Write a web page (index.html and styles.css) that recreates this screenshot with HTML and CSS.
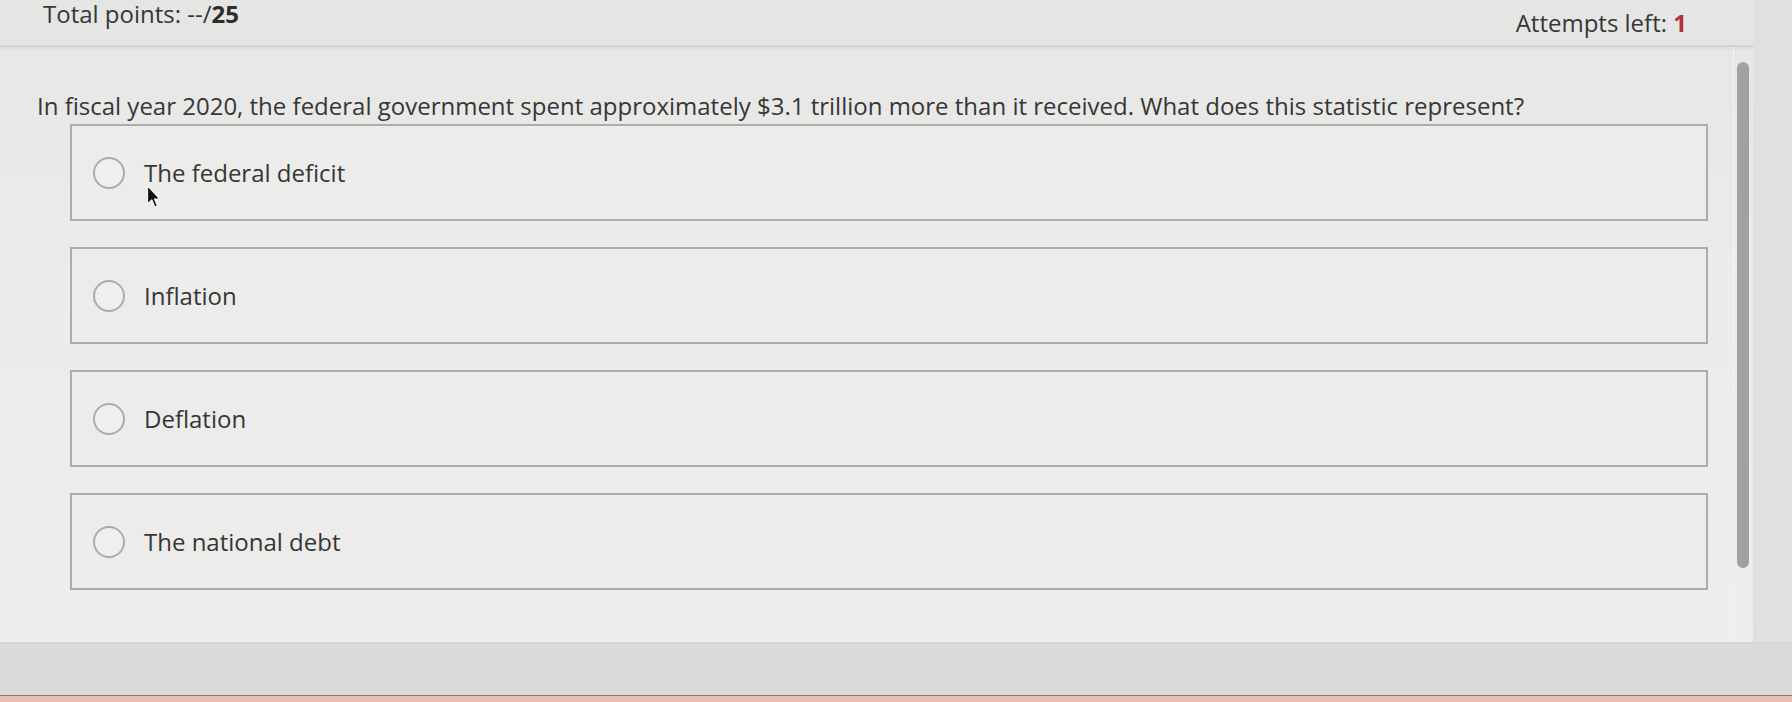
FILE: index.html
```html
<!DOCTYPE html>
<html lang="en">
<head>
<meta charset="utf-8">
<title>Question</title>
<link rel="stylesheet" href="styles.css">
</head>
<body>
<div class="screen">
  <div class="top">
    <div class="window">
      <header class="bar">
        <div class="points">Total points: --/<b>25</b></div>
        <div class="attempts">Attempts left: <b class="num">1</b></div>
      </header>
      <div class="body">
        <div class="content">
          <p class="question">In fiscal year 2020, the federal government spent approximately $3.1 trillion more than it received. What does this statistic represent?</p>
          <ul class="options">
            <li class="option"><span class="radio"></span><span class="label">The federal deficit</span></li>
            <li class="option"><span class="radio"></span><span class="label">Inflation</span></li>
            <li class="option"><span class="radio"></span><span class="label">Deflation</span></li>
            <li class="option"><span class="radio"></span><span class="label">The national debt</span></li>
          </ul>
        </div>
        <div class="scroll"><div class="thumb"></div></div>
      </div>
    </div>
    <div class="outer"></div>
  </div>
  <div class="band"></div>
  <div class="pink"></div>
  <svg class="cursor" width="15" height="25" viewBox="0 0 15 25" aria-hidden="true">
    <path d="M1.5 1.5 L1.5 20 L5.8 16 L8.8 23 L11.4 21.8 L8.5 15 L13.8 15 Z" fill="#111" stroke="#f4f4f4" stroke-width="1.2" stroke-linejoin="round"/>
  </svg>
</div>
</body>
</html>
```

FILE: styles.css
```css
* { box-sizing: border-box; }

html, body {
  margin: 0;
  padding: 0;
  background: #e1e2e0;
}

body {
  font-family: "Open Sans", "Noto Sans", "Liberation Sans", sans-serif;
  color: #363737;
}

.screen {
  position: relative;
  width: 1792px;
  height: 702px;
  display: flex;
  flex-direction: column;
  overflow: hidden;
}

.top {
  height: 642px;
  display: flex;
  flex-direction: row;
}

.window {
  width: 1753px;
  display: flex;
  flex-direction: column;
  background: linear-gradient(to bottom, #e6e6e4 0%, #ebebe9 40%, #eeeeec 100%);
}

.outer {
  flex: 1;
  background: #e0e1df;
}

.bar {
  height: 47px;
  display: flex;
  justify-content: space-between;
  align-items: flex-start;
  padding: 0 66px 0 43px;
  border-bottom: 2px solid #d2d3d1;
  box-shadow: 0 2px 3px rgba(0, 0, 0, 0.05);
  background: #e5e5e3;
  font-size: 24px;
  line-height: 28px;
}

.points b {
  font-weight: 700;
  color: #2c2d2d;
}

.attempts {
  margin-top: 9px;
}

.attempts .num {
  font-weight: 700;
  color: #b2323c;
}

.body {
  flex: 1;
  display: flex;
  flex-direction: row;
}

.content {
  flex: 1;
  padding-top: 47px;
}

.question {
  margin: 0 0 0 37px;
  font-size: 24px;
  line-height: 24px;
  white-space: nowrap;
}

.options {
  list-style: none;
  margin: 6px 25px 0 70px;
  padding: 0;
  display: flex;
  flex-direction: column;
  gap: 26px;
}

.option {
  height: 97px;
  display: flex;
  align-items: center;
  padding-left: 21px;
  border: 2px solid #acadab;
  background: #ececea;
}

.radio {
  width: 32px;
  height: 32px;
  border: 2px solid #abacaa;
  border-radius: 50%;
  background: #efefed;
  flex: none;
}

.label {
  margin-left: 19px;
  font-size: 24px;
  line-height: 24px;
  color: #353636;
}

.scroll {
  width: 20px;
  border-left: 1px solid #f3f4f2;
  padding: 15px 0 0 3px;
}

.thumb {
  width: 12px;
  height: 506px;
  border-radius: 6px;
  background: #a0a2a0;
}

.band {
  height: 53px;
  background: #dadbd8;
  border-top: 1px solid #d3d4d1;
}

.pink {
  flex: 1;
  background: #e7bfb1;
  border-top: 1px solid #8f7670;
}

.cursor {
  position: absolute;
  left: 146px;
  top: 184px;
}
```
